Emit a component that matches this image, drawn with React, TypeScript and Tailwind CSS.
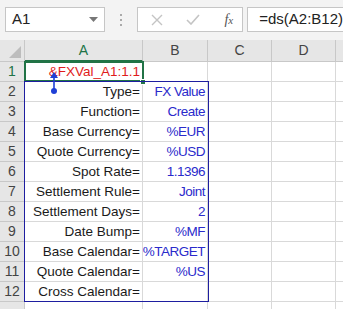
import React from 'react';

type Row = { label: string; value: string };

const rows: Row[] = [
  { label: 'Type=', value: 'FX Value' },
  { label: 'Function=', value: 'Create' },
  { label: 'Base Currency=', value: '%EUR' },
  { label: 'Quote Currency=', value: '%USD' },
  { label: 'Spot Rate=', value: '1.1396' },
  { label: 'Settlement Rule=', value: 'Joint' },
  { label: 'Settlement Days=', value: '2' },
  { label: 'Date Bump=', value: '%MF' },
  { label: 'Base Calendar=', value: '%TARGET' },
  { label: 'Quote Calendar=', value: '%US' },
  { label: 'Cross Calendar=', value: '' },
];

const cols = 'grid grid-cols-[25px_118px_65px_64px_64px_1fr]';
const hdr = 'h-[22px] bg-[#e6e6e6] border-r border-b border-[#c8c8c8] flex items-center justify-center text-[14px] text-[#444]';
const rowHdr = 'h-[20px] bg-[#e6e6e6] border-r border-b border-[#c8c8c8] flex items-center justify-center text-[14px] text-[#444]';
const cell = 'h-[20px] border-r border-b border-[#d9d9d9] flex items-end pb-[3px] justify-end pr-[2px] text-[13.5px] leading-none whitespace-nowrap';

const App: React.FC = () => {
  return (
    <div className="w-[343px] h-[309px] overflow-hidden bg-white font-['Liberation_Sans',sans-serif] select-none">
      {/* Name box + formula bar */}
      <div className="h-[40px] bg-[#f3f3f3] flex items-start pt-[7px] pl-[5px]">
        <div className="w-[101px] h-[25px] bg-white border border-[#c6c6c6] flex items-center justify-between pl-[6px] pr-[6px] text-[15px] text-[#222]">
          <span>A1</span>
          <svg width="9" height="5" viewBox="0 0 9 5"><path d="M0 0h9L4.5 5z" fill="#777" /></svg>
        </div>
        <div className="w-[32px] h-[25px] flex flex-col items-center justify-center gap-[3px]">
          <span className="w-[2px] h-[2px] bg-[#aaa]" />
          <span className="w-[2px] h-[2px] bg-[#aaa]" />
          <span className="w-[2px] h-[2px] bg-[#aaa]" />
        </div>
        <div className="w-[108px] h-[25px] bg-white border border-[#c6c6c6] flex items-center">
          <svg className="ml-[13px]" width="12" height="12" viewBox="0 0 12 12">
            <path d="M1 1l10 10M11 1L1 11" stroke="#c4c4c4" strokeWidth="1.4" />
          </svg>
          <svg className="ml-[23px]" width="14" height="11" viewBox="0 0 14 11">
            <path d="M1 6l4 4L13 1" stroke="#c4c4c4" strokeWidth="1.6" fill="none" />
          </svg>
          <span className="ml-auto mr-[9px] font-['Liberation_Serif',serif] italic text-[14px] text-[#555]">
            f<span className="text-[11px]">x</span>
          </span>
        </div>
        <div className="ml-[4px] flex-1 h-[25px] bg-white border border-[#c6c6c6] border-r-0 flex items-center pl-[11px] text-[15px] text-[#222]">
          =ds(A2:B12)
        </div>
      </div>

      <div className="relative">
        {/* Column headers */}
        <div className={cols}>
          <div className={`${hdr} items-end justify-end pr-[3px] pb-[3px]`}>
            <svg width="12" height="12" viewBox="0 0 12 12"><path d="M12 0v12H0z" fill="#bdbdbd" /></svg>
          </div>
          <div className={`${hdr} bg-[#d2d2d2] text-[#217346] border-b-2 border-b-[#217346]`}>A</div>
          <div className={hdr}>B</div>
          <div className={hdr}>C</div>
          <div className={hdr}>D</div>
          <div className={`${hdr} border-r-0`} />
        </div>

        {/* Row 1 */}
        <div className={cols}>
          <div className={`${rowHdr} bg-[#d2d2d2] text-[#217346]`}>1</div>
          <div className={`${cell} text-[#e01b1b]`}>&amp;FXVal_A1:1.1</div>
          <div className={cell} />
          <div className={cell} />
          <div className={cell} />
          <div className={`${cell} border-r-0`} />
        </div>

        {rows.map((r, i) => (
          <div key={i} className={cols}>
            <div className={rowHdr}>{i + 2}</div>
            <div className={`${cell} text-[#1a1a1a]`}>{r.label}</div>
            <div className={`${cell} text-[#2a2acb] tracking-[-0.5px]`}>{r.value}</div>
            <div className={cell} />
            <div className={cell} />
            <div className={`${cell} border-r-0`} />
          </div>
        ))}
        <div className={cols}>
          <div className={rowHdr} />
          <div className={cell} />
          <div className={cell} />
          <div className={cell} />
          <div className={cell} />
          <div className={`${cell} border-r-0`} />
        </div>

        {/* A1 selection */}
        <div className="absolute left-[24px] top-[21px] w-[120px] h-[21px] border-2 border-[#217346] pointer-events-none" />
        <div className="absolute left-[140px] top-[39px] w-[6px] h-[6px] bg-[#217346] border border-white pointer-events-none" />

        {/* range A2:B12 */}
        <div className="absolute left-[24px] top-[41px] w-[185px] h-[221px] border-[1.5px] border-[#1e1ea0] pointer-events-none" />

        {/* trace arrow */}
        <svg className="absolute left-[49px] top-[31px] pointer-events-none" width="10" height="24" viewBox="0 0 10 24">
          <path d="M5 6v14" stroke="#1f3fd6" strokeWidth="1.6" />
          <path d="M1 7L5 1l4 6z" fill="#1f3fd6" />
          <circle cx="5" cy="20" r="3" fill="#1f3fd6" />
        </svg>
      </div>
    </div>
  );
};

export default App;
